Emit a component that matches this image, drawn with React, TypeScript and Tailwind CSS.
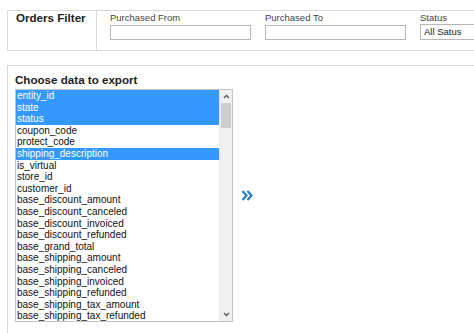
const fields = [
  { label: "Purchased From", value: "" },
  { label: "Purchased To", value: "" },
  { label: "Status", value: "All Satus" },
];

const columns = [
  { name: "entity_id", selected: true },
  { name: "state", selected: true },
  { name: "status", selected: true },
  { name: "coupon_code", selected: false },
  { name: "protect_code", selected: false },
  { name: "shipping_description", selected: true },
  { name: "is_virtual", selected: false },
  { name: "store_id", selected: false },
  { name: "customer_id", selected: false },
  { name: "base_discount_amount", selected: false },
  { name: "base_discount_canceled", selected: false },
  { name: "base_discount_invoiced", selected: false },
  { name: "base_discount_refunded", selected: false },
  { name: "base_grand_total", selected: false },
  { name: "base_shipping_amount", selected: false },
  { name: "base_shipping_canceled", selected: false },
  { name: "base_shipping_invoiced", selected: false },
  { name: "base_shipping_refunded", selected: false },
  { name: "base_shipping_tax_amount", selected: false },
  { name: "base_shipping_tax_refunded", selected: false },
];

const App = () => {
  return (
    <div
      className="w-[474px] h-[333px] overflow-hidden bg-white pt-[10px] pl-[7px] text-[#222]"
      style={{ fontFamily: '"Liberation Sans", Arial, sans-serif' }}
    >
      {/* filter bar */}
      <div className="flex w-[620px] h-[41px] border-t border-b border-l border-[#d9d9d9]">
        <div className="w-[89px] shrink-0 border-r border-[#d9d9d9] pl-[8px]">
          <h2 className="text-[11.6px] leading-[14px] font-bold text-[#222] whitespace-nowrap">Orders Filter</h2>
        </div>
        <div className="flex shrink-0 gap-[14px] pl-[13px]">
          {fields.map((field) => (
            <div key={field.label} className="w-[141px] shrink-0">
              <div className="pt-[1px] text-[9.5px] leading-[12px] text-[#444] whitespace-nowrap">{field.label}</div>
              {field.label === "Status" ? (
                <div className="h-[16px] w-[141px] border border-[#b8b8b8] pl-[3px] text-[9.5px] leading-[14px] text-[#222]">
                  {field.value}
                </div>
              ) : (
                <div className="mt-[1px] h-[15px] w-[141px] border border-[#b8b8b8] bg-white"></div>
              )}
            </div>
          ))}
        </div>
      </div>

      {/* export box */}
      <div className="mt-[14px] w-[620px] h-[300px] border-t border-l border-[#d9d9d9] pl-[7px] pt-[7px]">
        <h2 className="text-[11.6px] leading-[14px] font-bold text-[#222]">Choose data to export</h2>
        <div className="mt-[2px] flex items-start">
          <div className="flex w-[218px] h-[233px] shrink-0 border border-[#c4c4c4] overflow-hidden">
            <div className="flex-1 overflow-hidden">
              {columns.map((col) => (
                <div
                  key={col.name}
                  className={
                    col.selected
                      ? "h-[11.6px] pl-[1px] text-[10px] leading-[11.6px] bg-[#3399ff] text-white whitespace-nowrap"
                      : "h-[11.6px] pl-[1px] text-[10px] leading-[11.6px] text-[#111] whitespace-nowrap"
                  }
                >
                  {col.name}
                </div>
              ))}
            </div>
            <div className="w-[13px] bg-[#f0f0f0] border-l border-[#e8e8e8] flex flex-col">
              <div className="h-[13px] flex items-center justify-center">
                <svg width="7" height="5" viewBox="0 0 7 5">
                  <path d="M1 4 L3.5 1.5 L6 4" fill="none" stroke="#555" strokeWidth="1.3" />
                </svg>
              </div>
              <div className="h-[25px] mx-[1px] bg-[#cdcdcd]"></div>
              <div className="flex-1"></div>
              <div className="h-[13px] flex items-center justify-center">
                <svg width="7" height="5" viewBox="0 0 7 5">
                  <path d="M1 1 L3.5 3.5 L6 1" fill="none" stroke="#555" strokeWidth="1.3" />
                </svg>
              </div>
            </div>
          </div>
          <div className="ml-[8px] mt-[101px]">
            <svg width="13" height="11" viewBox="0 0 13 11">
              <path d="M1.5 1 L5.5 5.5 L1.5 10" fill="none" stroke="#2b7bb9" strokeWidth="2.2" />
              <path d="M6.5 1 L10.5 5.5 L6.5 10" fill="none" stroke="#2b7bb9" strokeWidth="2.2" />
            </svg>
          </div>
        </div>
      </div>
    </div>
  );
};

export default App;
